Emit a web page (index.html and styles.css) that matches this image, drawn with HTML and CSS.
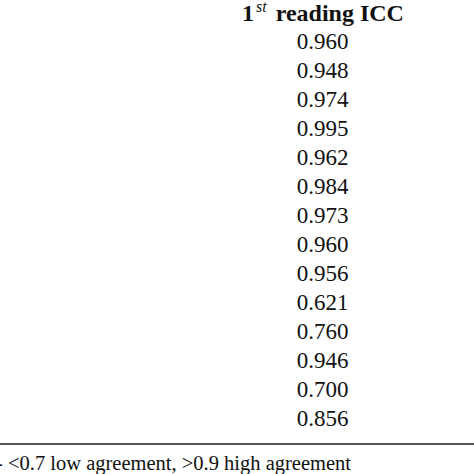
FILE: index.html
```html
<!DOCTYPE html>
<html>
<head>
<meta charset="utf-8">
<link rel="stylesheet" href="styles.css">
</head>
<body>
<div class="table">
  <div class="col">
    <div class="head">1<sup class="sup">st</sup> reading ICC</div>
    <div class="cell">0.960</div>
    <div class="cell">0.948</div>
    <div class="cell">0.974</div>
    <div class="cell">0.995</div>
    <div class="cell">0.962</div>
    <div class="cell">0.984</div>
    <div class="cell">0.973</div>
    <div class="cell">0.960</div>
    <div class="cell">0.956</div>
    <div class="cell">0.621</div>
    <div class="cell">0.760</div>
    <div class="cell">0.946</div>
    <div class="cell">0.700</div>
    <div class="cell">0.856</div>
  </div>
</div>
<div class="rule"></div>
<div class="note">- &lt;0.7 low agreement, &gt;0.9 high agreement</div>
</body>
</html>
```
FILE: styles.css
```css
html, body {
  margin: 0;
  padding: 0;
  background: #fff;
}
body {
  width: 474px;
  height: 474px;
  overflow: hidden;
  font-family: "Liberation Serif", "Times New Roman", serif;
  color: #111;
}
.table {
  display: flex;
  padding-left: 222px;
}
.col {
  width: 201px;
  display: flex;
  flex-direction: column;
  align-items: center;
}
.head {
  align-self: flex-start;
  margin-left: 20px;
  font-weight: bold;
  font-size: 24px;
  line-height: 27px;
  height: 27px;
  white-space: nowrap;
}
.sup {
  font-style: italic;
  font-weight: normal;
  font-size: 16px;
  vertical-align: 9px;
  line-height: 0;
  margin-left: 2px;
  margin-right: 3px;
}
.cell {
  font-size: 23px;
  line-height: 29px;
}
.rule {
  margin-top: 10px;
  height: 2px;
  background: #555;
  width: 474px;
}
.note {
  font-size: 20.5px;
  line-height: 24px;
  padding-top: 6px;
  margin-left: -4px;
  white-space: nowrap;
}
```
